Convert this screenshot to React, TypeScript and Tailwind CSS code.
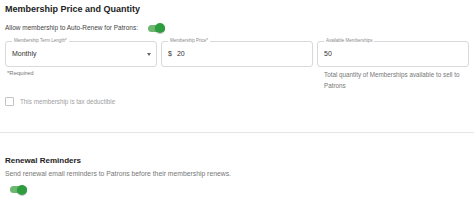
function Toggle() {
  return (
    <div className="relative h-[7px] w-[17px] rounded-full bg-[#6cb86f]">
      <div className="absolute -top-[1.5px] right-0 h-[10px] w-[10px] rounded-full bg-[#2e9d3f] shadow-[0_1px_1px_rgba(0,0,0,0.25)]" />
    </div>
  );
}

function Field({
  label,
  children,
}: {
  label: string;
  children: React.ReactNode;
}) {
  return (
    <div className="relative flex h-[26px] items-center rounded-[3px] border border-[#d9d9d9] px-[6px]">
      <span className="absolute -top-[4px] left-[6px] bg-white px-[2px] text-[4.5px] leading-[6px] text-[#8a8a8a]">
        {label}
      </span>
      {children}
    </div>
  );
}

export default function App() {
  return (
    <div
      className="h-[205px] w-[474px] overflow-hidden bg-white text-[#333]"
      style={{ fontFamily: "'Liberation Sans', Arial, sans-serif" }}
    >
      <div className="px-[5px] pt-[3px]">
        <h2 className="text-[9px] font-semibold leading-[12px] text-[#222]">
          Membership Price and Quantity
        </h2>
        <div className="mt-[9px] flex items-center gap-[10px]">
          <span className="text-[6.5px] leading-[8px] text-[#444]">
            Allow membership to Auto-Renew for Patrons:
          </span>
          <Toggle />
        </div>

        <div className="mt-[9px] grid grid-cols-3 gap-[4px]">
          <div>
            <Field label="Membership Term Length*">
              <span className="flex-1 text-[7px] text-[#333]">Monthly</span>
              <span className="mr-[-1px] h-0 w-0 border-x-[2.5px] border-t-[3px] border-x-transparent border-t-[#666]" />
            </Field>
            <p className="mt-[2px] pl-[2px] text-[6px] leading-[9px] text-[#777]">
              *Required
            </p>
          </div>
          <div>
            <Field label="Membership Price*">
              <span className="text-[7px] text-[#333]">$</span>
              <span className="ml-[5px] text-[7px] text-[#333]">20</span>
            </Field>
          </div>
          <div>
            <Field label="Available Memberships">
              <span className="text-[7px] text-[#333]">50</span>
            </Field>
            <p className="mt-[2px] pl-[7px] pr-[2px] text-[6.3px] leading-[11px] text-[#777]">
              Total quantity of Memberships available to sell to Patrons
            </p>
          </div>
        </div>

        <label className="mt-[6px] flex items-center gap-[6px]">
          <span className="h-[9px] w-[9px] rounded-[1px] border border-[#c4c4c4]" />
          <span className="text-[6.3px] text-[#a0a0a0]">
            This membership is tax deductible
          </span>
        </label>
      </div>

      <div className="mt-[26px] h-[1px] bg-[#e6e6e6] shadow-[0_2px_3px_rgba(0,0,0,0.04)]" />

      <div className="px-[5px] pt-[23px]">
        <h3 className="text-[8px] font-semibold leading-[10px] text-[#222]">
          Renewal Reminders
        </h3>
        <p className="mt-[4px] text-[6.8px] leading-[8px] text-[#777]">
          Send renewal email reminders to Patrons before their membership renews.
        </p>
        <div className="mt-[8px] pl-[5px]">
          <Toggle />
        </div>
      </div>
    </div>
  );
}
